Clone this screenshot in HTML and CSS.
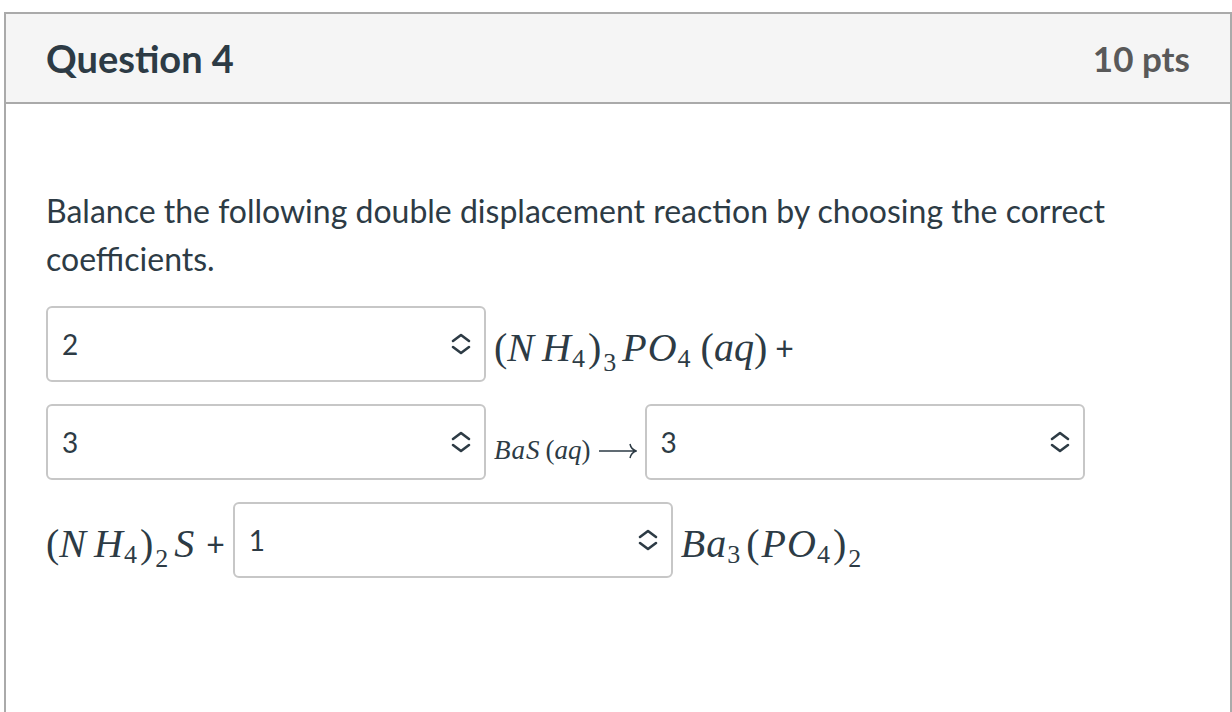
FILE: index.html
```html
<!DOCTYPE html>
<html lang="en">
<head>
    <meta charset="UTF-8">
    <meta name="viewport" content="width=device-width, initial-scale=1.0">
    <title>Question 4</title>
    <link rel="stylesheet" href="styles.css">
</head>
<body>
    <main class="question">
        <header class="question-header">
            <h1>Question 4</h1>
            <span class="points">10 pts</span>
        </header>

        <form class="question-body">
            <p class="prompt">Balance the following double displacement reaction by choosing the correct coefficients.</p>

            <div class="equation-row">
                <div class="coefficient">
                    <select aria-label="Coefficient of ammonium phosphate">
                        <option>1</option>
                        <option selected>2</option>
                        <option>3</option>
                    </select>
                    <svg class="chevrons" viewBox="0 0 20 22" aria-hidden="true"><path d="M2 8 L10 2 L18 8 M2 14 L10 20 L18 14"/></svg>
                </div>
                <span class="formula"><span>(</span><i class="nitrogen">N</i><i>H</i><sub>4</sub><span class="close">)</span><sub class="low">3</sub><i>P</i><i>O</i><sub>4</sub><span class="state">(<i>aq</i>)</span></span>
                <span class="plus">+</span>
            </div>

            <div class="equation-row">
                <div class="coefficient">
                    <select aria-label="Coefficient of barium sulfide">
                        <option>1</option>
                        <option>2</option>
                        <option selected>3</option>
                    </select>
                    <svg class="chevrons" viewBox="0 0 20 22" aria-hidden="true"><path d="M2 8 L10 2 L18 8 M2 14 L10 20 L18 14"/></svg>
                </div>
                <span class="formula small"><i>B</i><i>a</i><i>S</i><span class="state">(<i>aq</i>)</span></span>
                <svg class="arrow" viewBox="0 0 38 16" role="img" aria-label="yields"><path d="M0 8 H37 M31 1 Q32 6 37 8 Q32 10 31 15"/></svg>
                <div class="coefficient">
                    <select aria-label="Coefficient of ammonium sulfide">
                        <option>1</option>
                        <option>2</option>
                        <option selected>3</option>
                    </select>
                    <svg class="chevrons" viewBox="0 0 20 22" aria-hidden="true"><path d="M2 8 L10 2 L18 8 M2 14 L10 20 L18 14"/></svg>
                </div>
            </div>

            <div class="equation-row">
                <span class="formula"><span>(</span><i class="nitrogen">N</i><i>H</i><sub>4</sub><span class="close">)</span><sub class="low">2</sub><i>S</i></span>
                <span class="plus">+</span>
                <div class="coefficient">
                    <select aria-label="Coefficient of barium phosphate">
                        <option selected>1</option>
                        <option>2</option>
                        <option>3</option>
                    </select>
                    <svg class="chevrons" viewBox="0 0 20 22" aria-hidden="true"><path d="M2 8 L10 2 L18 8 M2 14 L10 20 L18 14"/></svg>
                </div>
                <span class="formula"><i>B</i><i>a</i><sub>3</sub><span class="open">(</span><i>P</i><i>O</i><sub>4</sub><span class="close">)</span><sub class="low">2</sub></span>
            </div>
        </form>
    </main>
</body>
</html>
```
FILE: styles.css
```css
:root {
    --text: #2d3b45;
    --points: #595959;
    --frame: #aaaaaa;
    --field-border: #c7c7c7;
    --header-bg: #f5f5f5;
}

* {
    box-sizing: border-box;
}

body {
    margin: 0;
    padding: 12px 0 0 4px;
    background: #fff;
    color: var(--text);
    font-family: Lato, sans-serif;
    font-size: 32px;
    line-height: 48px;
}

.question {
    min-height: calc(100vh - 12px);
    border: 2px solid var(--frame);
    border-bottom: none;
}

.question-header {
    display: flex;
    justify-content: space-between;
    align-items: center;
    padding: 20px 40px;
    background: var(--header-bg);
    border-bottom: 2px solid var(--frame);
}

.question-header h1 {
    margin: 0;
    font-size: 38px;
    font-weight: 700;
}

.points {
    color: var(--points);
    font-size: 35px;
    font-weight: 700;
}

.question-body {
    padding: 83px 40px 40px;
}

.prompt {
    margin: 0 0 23px;
}

.equation-row {
    display: flex;
    align-items: center;
    gap: 8px;
    margin-bottom: 22px;
}

.coefficient {
    position: relative;
    flex: 0 1 440px;
}

.coefficient select {
    appearance: none;
    display: block;
    width: 100%;
    height: 76px;
    padding: 0 48px 0 14px;
    border: 2px solid var(--field-border);
    border-radius: 6px;
    background: #fff;
    color: var(--text);
    font-family: inherit;
    font-size: 28px;
}

.chevrons {
    position: absolute;
    right: 15px;
    top: 27px;
    width: 20px;
    height: 22px;
    fill: none;
    stroke: var(--text);
    stroke-width: 2.6;
    stroke-linecap: round;
    stroke-linejoin: round;
    pointer-events: none;
}

.formula {
    padding-top: 8px;
    font-family: "Liberation Serif", serif;
    font-size: 40px;
    white-space: nowrap;
}

.formula i {
    margin-right: 1px;
}

.formula i:last-child {
    margin-right: 4px;
}

.formula .nitrogen {
    margin-right: 8px;
}

.formula sub {
    font-size: 26px;
    line-height: 0;
    vertical-align: -6px;
}

.formula .low {
    margin: 0 6px 0 2px;
    vertical-align: -10px;
}

.formula .low:last-child {
    margin-right: 0;
}

.open {
    margin: 0 2px 0 6px;
}

.close {
    margin-left: 3px;
}

.state {
    margin-left: 10px;
}

.plus {
    padding-top: 8px;
}

.formula .state i {
    margin-right: 0;
}

.small {
    padding-top: 16px;
    font-size: 27px;
}

.small .state {
    margin-left: 5px;
}

.arrow {
    flex: none;
    width: 38px;
    height: 16px;
    margin-top: 18px;
    fill: none;
    stroke: var(--text);
    stroke-width: 1.5;
}
```
